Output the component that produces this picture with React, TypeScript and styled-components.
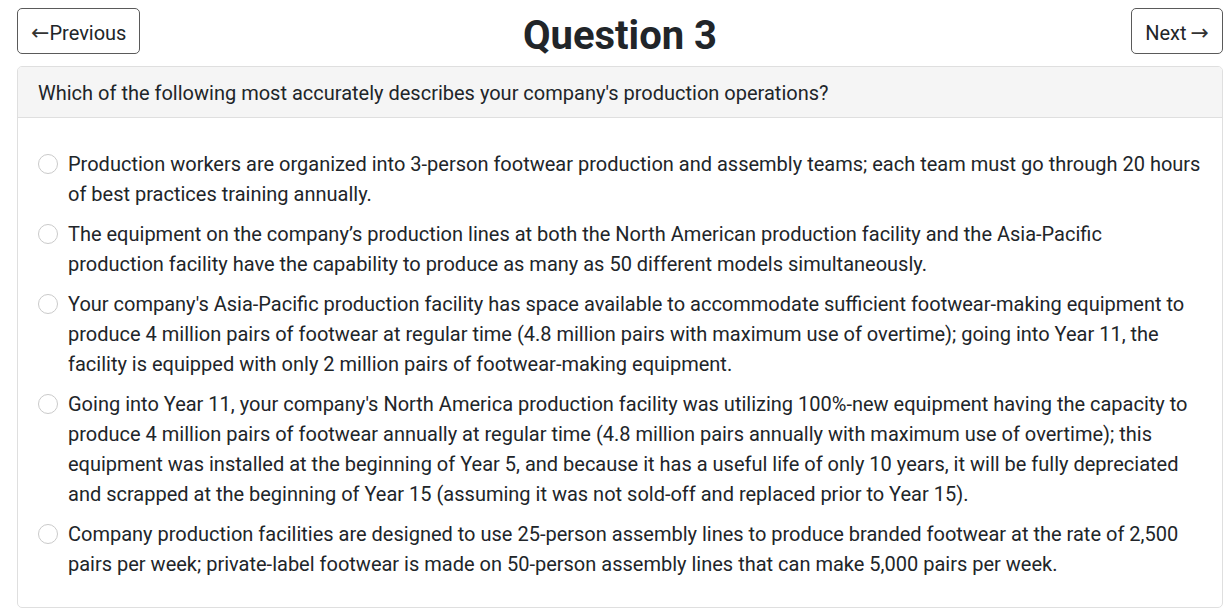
import React, { useState } from "react";
import styled, { createGlobalStyle } from "styled-components";

const GlobalStyle = createGlobalStyle`
  html, body { margin: 0; padding: 0; background: #fff; }
  body {
    font-family: Roboto, "Liberation Sans", Arial, sans-serif;
    font-size: 20px;
    line-height: 1.5;
    color: #212529;
  }
  * { box-sizing: border-box; }
`;

const Page = styled.div`
  padding: 0 4px 0 17px;
`;

const TopBar = styled.div`
  display: grid;
  grid-template-columns: 1fr auto 1fr;
  align-items: start;
  padding-top: 8px;
  margin-bottom: 6px;
`;

const NavButton = styled.button<{ $align: "start" | "end" }>`
  justify-self: ${(p) => p.$align};
  height: 46px;
  font-family: inherit;
  font-size: 20px;
  line-height: 30px;
  color: #212529;
  background: #fff;
  border: 1px solid #5a5a5a;
  border-radius: 5px;
  padding: 9px 13px 5px 13px;
  cursor: pointer;
`;

const Arrow = styled.span<{ $gap?: number }>`
  font-family: "DejaVu Sans", sans-serif;
  font-size: 22px;
  line-height: 0;
  color: #333;
  margin-left: ${(p) => p.$gap ?? 0}px;
`;

const Title = styled.h1`
  margin: 4px 0 0;
  font-size: 40px;
  font-weight: 700;
  line-height: 48px;
  color: #212529;
`;

const Card = styled.div`
  border: 1px solid #dfdfdf;
  border-radius: 5px;
  overflow: hidden;
`;

const CardHeader = styled.div`
  background: #f5f5f5;
  border-bottom: 1px solid #dfdfdf;
  padding: 11px 20px 9px;
  line-height: 30px;
`;

const CardBody = styled.div`
  padding: 31px 20px 28px 20px;
  display: flex;
  flex-direction: column;
  gap: 10px;
`;

const Option = styled.label`
  display: flex;
  align-items: flex-start;
  gap: 10px;
  line-height: 30px;
  cursor: pointer;
`;

const Radio = styled.input`
  appearance: none;
  flex: 0 0 auto;
  width: 20px;
  height: 20px;
  margin: 5px 0 0 0;
  border: 1px solid #cacaca;
  border-radius: 50%;
  background: #fff;
  cursor: pointer;
  &:checked {
    border-color: #0d6efd;
    background: radial-gradient(circle, #fff 0 4px, #0d6efd 4.5px);
  }
`;

const options = [
  "Production workers are organized into 3-person footwear production and assembly teams; each team must go through 20 hours of best practices training annually.",
  "The equipment on the company\u2019s production lines at both the North American production facility and the Asia-Pacific production facility have the capability to produce as many as 50 different models simultaneously.",
  "Your company's Asia-Pacific production facility has space available to accommodate sufficient footwear-making equipment to produce 4 million pairs of footwear at regular time (4.8 million pairs with maximum use of overtime); going into Year 11, the facility is equipped with only 2 million pairs of footwear-making equipment.",
  "Going into Year 11, your company's North America production facility was utilizing 100%-new equipment having the capacity to produce 4 million pairs of footwear annually at regular time (4.8 million pairs annually with maximum use of overtime); this equipment was installed at the beginning of Year 5, and because it has a useful life of only 10 years, it will be fully depreciated and scrapped at the beginning of Year 15 (assuming it was not sold-off and replaced prior to Year 15).",
  "Company production facilities are designed to use 25-person assembly lines to produce branded footwear at the rate of 2,500 pairs per week; private-label footwear is made on 50-person assembly lines that can make 5,000 pairs per week.",
];

export default function App() {
  const [choice, setChoice] = useState<number | null>(null);
  return (
    <>
      <GlobalStyle />
      <Page>
        <TopBar>
          <NavButton type="button" $align="start">
            <Arrow>←</Arrow>Previous
          </NavButton>
          <Title>Question 3</Title>
          <NavButton type="button" $align="end">
            Next<Arrow $gap={4}>→</Arrow>
          </NavButton>
        </TopBar>
        <Card>
          <CardHeader>
            Which of the following most accurately describes your company's production operations?
          </CardHeader>
          <CardBody>
            {options.map((text, i) => (
              <Option key={i}>
                <Radio
                  type="radio"
                  name="q3"
                  checked={choice === i}
                  onChange={() => setChoice(i)}
                />
                <span>{text}</span>
              </Option>
            ))}
          </CardBody>
        </Card>
      </Page>
    </>
  );
}
